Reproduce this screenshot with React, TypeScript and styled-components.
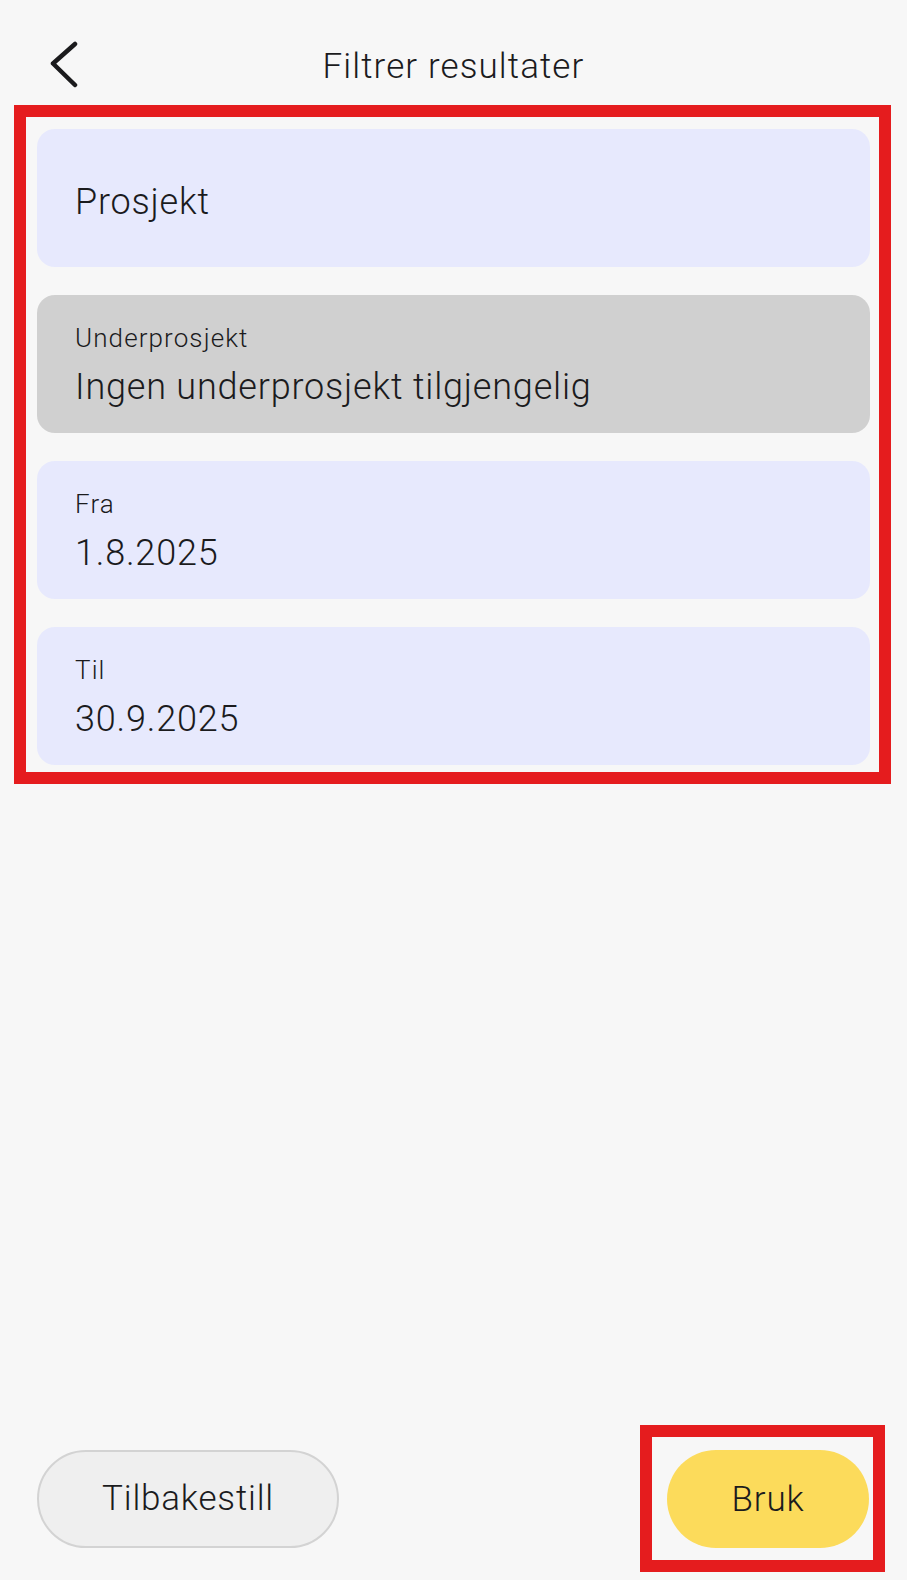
import React from "react";
import styled, { createGlobalStyle } from "styled-components";

const GlobalStyle = createGlobalStyle`
  html, body {
    margin: 0;
    padding: 0;
    background: #f7f7f7;
  }
  body {
    font-family: Roboto, "Noto Sans", "Liberation Sans", sans-serif;
    color: #1b1b1d;
  }
`;

const Screen = styled.div`
  min-height: 100vh;
  display: flex;
  flex-direction: column;
  box-sizing: border-box;
  background: #f7f7f7;
`;

const Header = styled.div`
  display: grid;
  grid-template-columns: 1fr auto 1fr;
  align-items: center;
  height: 81px;
  padding-top: 24px;
`;

const BackButton = styled.button`
  justify-self: start;
  margin-left: 49px;
  padding: 0;
  border: none;
  background: none;
  display: flex;
  cursor: pointer;
`;

const Title = styled.h1`
  margin: 0;
  padding-top: 4px;
  font-size: 35px;
  font-weight: 300;
  letter-spacing: 1.1px;
  color: #1b1b1d;
`;

const Highlight = styled.div`
  border: 12px solid #e51c1e;
  box-sizing: border-box;
`;

const FilterList = styled(Highlight)`
  margin: 0 16px 0 14px;
  padding: 12px 9px 7px 11px;
  display: flex;
  flex-direction: column;
  gap: 28px;
`;

const Field = styled.div<{ $disabled?: boolean }>`
  height: 138px;
  box-sizing: border-box;
  border-radius: 18px;
  background: ${(p) => (p.$disabled ? "#d0d0d0" : "#e7e9fd")};
  padding: 3px 38px 0;
  display: flex;
  flex-direction: column;
  justify-content: center;
  gap: 9px;
`;

const FieldLabel = styled.div`
  font-size: 26px;
  line-height: 30px;
  font-weight: 300;
  letter-spacing: 1.1px;
`;

const FieldValue = styled.div`
  font-size: 36px;
  line-height: 42px;
  font-weight: 300;
  letter-spacing: 0.8px;
  padding-top: 4px;
`;

const Footer = styled.div`
  margin-top: auto;
  display: flex;
  justify-content: space-between;
  align-items: center;
  padding: 0 22px 8px 37px;
`;

const PillButton = styled.button<{ $primary?: boolean }>`
  height: 98px;
  border-radius: 49px;
  box-sizing: border-box;
  font-family: inherit;
  font-size: 35px;
  font-weight: 300;
  letter-spacing: 0.8px;
  color: #1b1b1d;
  cursor: pointer;
  width: ${(p) => (p.$primary ? "202px" : "302px")};
  background: ${(p) => (p.$primary ? "#fcdb5b" : "#efefef")};
  border: ${(p) => (p.$primary ? "none" : "2px solid #d3d3d3")};
`;

const ApplyFrame = styled(Highlight)`
  padding: 13px 4px 12px 15px;
  display: flex;
`;

function ChevronLeft() {
  return (
    <svg width="30" height="48" viewBox="0 0 30 48" fill="none">
      <path
        d="M26 3 L4 22.5 L26 44"
        stroke="#1b1b1d"
        strokeWidth="4.5"
        strokeLinecap="round"
        strokeLinejoin="round"
      />
    </svg>
  );
}

export default function App() {
  return (
    <Screen>
      <GlobalStyle />
      <Header>
        <BackButton aria-label="Tilbake">
          <ChevronLeft />
        </BackButton>
        <Title>Filtrer resultater</Title>
        <div />
      </Header>

      <FilterList>
        <Field>
          <FieldValue>Prosjekt</FieldValue>
        </Field>
        <Field $disabled>
          <FieldLabel>Underprosjekt</FieldLabel>
          <FieldValue>Ingen underprosjekt tilgjengelig</FieldValue>
        </Field>
        <Field>
          <FieldLabel>Fra</FieldLabel>
          <FieldValue>1.8.2025</FieldValue>
        </Field>
        <Field>
          <FieldLabel>Til</FieldLabel>
          <FieldValue>30.9.2025</FieldValue>
        </Field>
      </FilterList>

      <Footer>
        <PillButton>Tilbakestill</PillButton>
        <ApplyFrame>
          <PillButton $primary>Bruk</PillButton>
        </ApplyFrame>
      </Footer>
    </Screen>
  );
}
